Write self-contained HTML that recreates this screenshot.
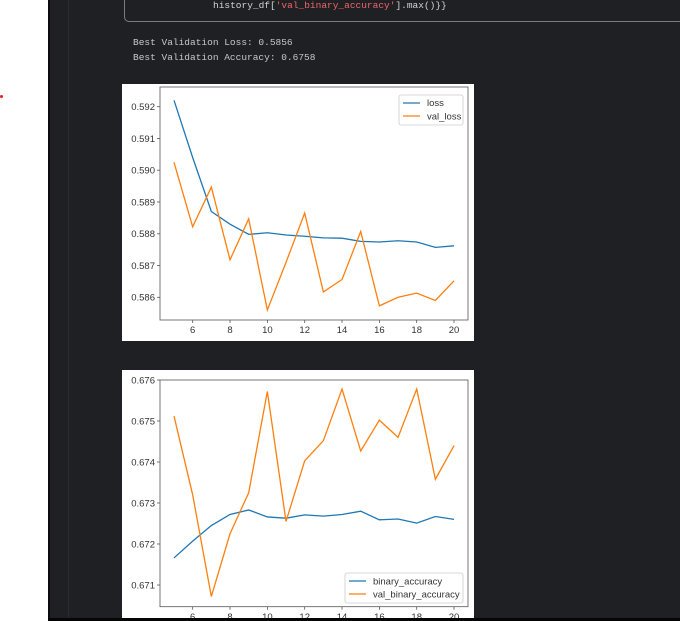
<!DOCTYPE html>
<html><head><meta charset="utf-8"><style>
html,body{margin:0;padding:0;width:680px;height:621px;overflow:hidden;background:#fff;font-family:"Liberation Sans",sans-serif}
.dark{position:absolute;left:48px;top:0;width:632px;height:621px;background:#1f2024}
.edge{position:absolute;left:48px;top:0;width:2px;height:621px;background:#0c0c0e}
.vl{position:absolute;left:68px;top:0;width:1px;height:621px;background:#2b2c30}
.cell{position:absolute;left:124px;top:-10px;width:600px;height:30px;border:1.5px solid #7a7b80;border-radius:5px;background:#1f2024}
.code{position:absolute;left:213px;top:0px;font:9.5px "Liberation Mono",monospace;color:#d4d4d4;white-space:pre}
.code b{font-weight:normal;color:#f0656a}
.out{position:absolute;left:133px;font:9.5px "Liberation Mono",monospace;color:#c8c8c8;white-space:pre}
.bot{position:absolute;left:48px;top:618px;width:632px;height:3px;background:#050505}
.dot{position:absolute;left:0;top:95px;width:3px;height:3px;background:#e02020;border-radius:50%}
svg{position:absolute;left:0;top:0}
</style></head><body>
<div class="dot"></div>
<div class="dark"></div><div class="edge"></div><div class="vl"></div>
<div class="cell"></div>
<div class="code">history_df[<b>'val_binary_accuracy'</b>].max()}}</div>
<div class="out" style="top:37px">Best Validation Loss: 0.5856</div>
<div class="out" style="top:52px">Best Validation Accuracy: 0.6758</div>
<svg width="680" height="621" font-family="Liberation Sans, sans-serif" font-size="9.5" fill="#333">
<rect x="122" y="84" width="352" height="257" fill="#fff"/>
<rect x="122" y="370" width="352" height="260" fill="#fff"/>
<!-- chart 1 -->
<rect x="160" y="87" width="308" height="233" fill="none" stroke="#555" stroke-width="0.8"/>
<g stroke="#555" stroke-width="0.8">
<line x1="157" x2="160" y1="106.7" y2="106.7"/><line x1="157" x2="160" y1="138.5" y2="138.5"/><line x1="157" x2="160" y1="170.2" y2="170.2"/><line x1="157" x2="160" y1="202" y2="202"/><line x1="157" x2="160" y1="233.8" y2="233.8"/><line x1="157" x2="160" y1="265.5" y2="265.5"/><line x1="157" x2="160" y1="297.3" y2="297.3"/>
<line y1="320" y2="323" x1="192.7" x2="192.7"/><line y1="320" y2="323" x1="230" x2="230"/><line y1="320" y2="323" x1="267.4" x2="267.4"/><line y1="320" y2="323" x1="304.7" x2="304.7"/><line y1="320" y2="323" x1="342" x2="342"/><line y1="320" y2="323" x1="379.4" x2="379.4"/><line y1="320" y2="323" x1="416.7" x2="416.7"/><line y1="320" y2="323" x1="454" x2="454"/>
</g>
<g text-anchor="end"><text x="155" y="110">0.592</text><text x="155" y="142">0.591</text><text x="155" y="173.5">0.590</text><text x="155" y="205.5">0.589</text><text x="155" y="237">0.588</text><text x="155" y="269">0.587</text><text x="155" y="300.5">0.586</text></g>
<g text-anchor="middle"><text x="192.7" y="333">6</text><text x="230" y="333">8</text><text x="267.4" y="333">10</text><text x="304.7" y="333">12</text><text x="342" y="333">14</text><text x="379.4" y="333">16</text><text x="416.7" y="333">18</text><text x="454" y="333">20</text></g>
<g transform="translate(80.65,18914.5) scale(18.67,-31.77)" fill="none" stroke-width="1.3">
<polyline vector-effect="non-scaling-stroke" stroke="#1f77b4" points="5,592.2 6,590.4 7,588.7 8,588.3 9,587.98 10,588.03 11,587.96 12,587.92 13,587.87 14,587.86 15,587.76 16,587.74 17,587.78 18,587.74 19,587.57 20,587.62"/>
<polyline vector-effect="non-scaling-stroke" stroke="#ff7f0e" points="5,590.25 6,588.22 7,589.47 8,587.18 9,588.47 10,585.6 11,587.1 12,588.65 13,586.17 14,586.56 15,588.07 16,585.73 17,586.0 18,586.13 19,585.9 20,586.52"/>
</g>
<rect x="399" y="95" width="64" height="30" fill="#fff" stroke="#ccc" stroke-width="0.8" rx="2"/>
<line x1="403" x2="420" y1="103" y2="103" stroke="#1f77b4" stroke-width="1.3"/><text x="427" y="106">loss</text>
<line x1="403" x2="420" y1="116" y2="116" stroke="#ff7f0e" stroke-width="1.3"/><text x="427" y="119.5">val_loss</text>
<!-- chart 2 -->
<rect x="160" y="380" width="308" height="226.7" fill="none" stroke="#555" stroke-width="0.8"/>
<g stroke="#555" stroke-width="0.8">
<line x1="157" x2="160" y1="380" y2="380"/><line x1="157" x2="160" y1="421" y2="421"/><line x1="157" x2="160" y1="462" y2="462"/><line x1="157" x2="160" y1="503" y2="503"/><line x1="157" x2="160" y1="544" y2="544"/><line x1="157" x2="160" y1="585" y2="585"/>
<line y1="606.7" y2="609.7" x1="192.7" x2="192.7"/><line y1="606.7" y2="609.7" x1="230" x2="230"/><line y1="606.7" y2="609.7" x1="267.4" x2="267.4"/><line y1="606.7" y2="609.7" x1="304.7" x2="304.7"/><line y1="606.7" y2="609.7" x1="342" x2="342"/><line y1="606.7" y2="609.7" x1="379.4" x2="379.4"/><line y1="606.7" y2="609.7" x1="416.7" x2="416.7"/><line y1="606.7" y2="609.7" x1="454" x2="454"/>
</g>
<g text-anchor="end"><text x="155" y="383.5">0.676</text><text x="155" y="424.5">0.675</text><text x="155" y="465.5">0.674</text><text x="155" y="506.5">0.673</text><text x="155" y="547.5">0.672</text><text x="155" y="588.5">0.671</text></g>
<g text-anchor="middle"><text x="192.7" y="620">6</text><text x="230" y="620">8</text><text x="267.4" y="620">10</text><text x="304.7" y="620">12</text><text x="342" y="620">14</text><text x="379.4" y="620">16</text><text x="416.7" y="620">18</text><text x="454" y="620">20</text></g>
<g transform="translate(80.65,28096) scale(18.67,-41)" fill="none">
<polyline vector-effect="non-scaling-stroke" stroke-width="1.3" stroke="#1f77b4" points="5,671.66 6,672.07 7,672.45 8,672.72 9,672.83 10,672.66 11,672.63 12,672.71 13,672.68 14,672.72 15,672.8 16,672.59 17,672.61 18,672.51 19,672.67 20,672.6"/>
<polyline vector-effect="non-scaling-stroke" stroke-width="1.3" stroke="#ff7f0e" points="5,675.12 6,673.2 7,670.72 8,672.25 9,673.25 10,675.72 11,672.55 12,674.03 13,674.52 14,675.78 15,674.27 16,675.02 17,674.6 18,675.78 19,673.58 20,674.4"/>
</g>
<rect x="345" y="573" width="118" height="30" fill="#fff" stroke="#ccc" stroke-width="0.8" rx="2"/>
<line x1="349" x2="366" y1="581" y2="581" stroke="#1f77b4" stroke-width="1.3"/><text x="373" y="584.5">binary_accuracy</text>
<line x1="349" x2="366" y1="594" y2="594" stroke="#ff7f0e" stroke-width="1.3"/><text x="373" y="597.5">val_binary_accuracy</text>
</svg>
<div class="bot"></div>
</body></html>
